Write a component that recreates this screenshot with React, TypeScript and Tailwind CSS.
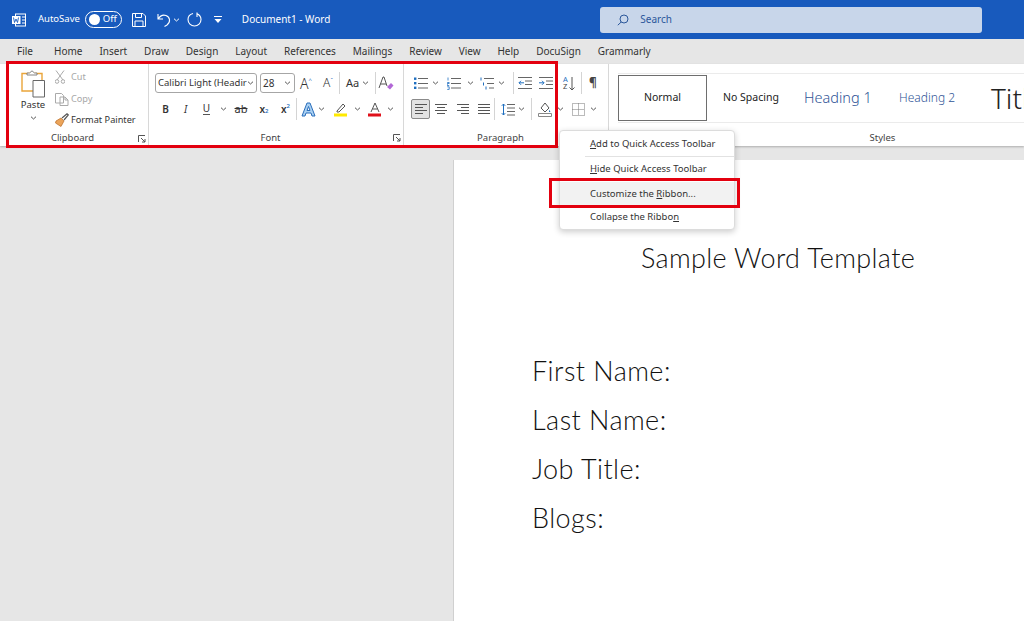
import type { ReactNode } from "react"

const tabs = ["Insert", "Draw", "Design", "Layout", "References", "Mailings", "Review", "View", "Help", "DocuSign", "Grammarly"]

function Chevron({ className = "" }: { className?: string }) {
  return (
    <svg viewBox="0 0 7 4" className={`h-[4px] w-[7px] shrink-0 ${className}`} fill="none" stroke="#555" strokeWidth="1">
      <path d="M1 .7 3.5 3 6 .7" />
    </svg>
  )
}

function Sep() {
  return <div className="h-[22px] w-px shrink-0 bg-[#d4d4d4]" />
}

function Launcher() {
  return (
    <svg viewBox="0 0 8 8" className="h-[8px] w-[8px]" fill="none" stroke="#555" strokeWidth="1">
      <path d="M.5 7V.5H7M3 3l4 4M7 4v3H4" />
    </svg>
  )
}

function Lines({ rows }: { rows: [number, number][] }) {
  return (
    <svg viewBox="0 0 14 12" className="h-[12px] w-[14px]" stroke="#555" strokeWidth="1">
      {rows.map(([a, b], i) => (
        <path key={i} d={`M${a} ${1.5 + i * 3}H${b}`} />
      ))}
    </svg>
  )
}

function ListIcon({ kind }: { kind: "bullet" | "number" | "multi" }) {
  return (
    <svg viewBox="0 0 14 13" className="h-[13px] w-[14px]" strokeWidth="1">
      {kind === "bullet" && (
        <>
          <rect x="0" y="0.5" width="2.4" height="2.4" fill="#1f6fc0" />
          <rect x="0" y="5" width="2.4" height="2.4" fill="#1f6fc0" />
          <rect x="0" y="9.6" width="2.4" height="2.4" fill="#1f6fc0" />
        </>
      )}
      {kind === "number" && (
        <path d="M1 .5v3M.2 5.5h2v1h-2v2h2M.2 9.8h2v2.6h-2" stroke="#1f6fc0" fill="none" strokeWidth=".8" />
      )}
      {kind === "multi" && <path d="M1 .5v3M3.5 5.5v3M6 9.5v3" stroke="#1f6fc0" strokeWidth="1" />}
      <path d={kind === "multi" ? "M4 1.5h10M7 6.5h7M9 11h5" : "M4 1.5h10M4 6.5h10M4 11h10"} stroke="#666" />
    </svg>
  )
}

function Indent({ flip }: { flip?: boolean }) {
  return (
    <svg viewBox="0 0 14 12" className="h-[12px] w-[14px]" fill="none" strokeWidth="1">
      <path d="M0 .5h14M7 4h7M7 7.5h7M0 11.5h14" stroke="#666" />
      <path d={flip ? "M0 5.8h5M3 3.8l2 2-2 2" : "M6 5.8H1M3 3.8l-2 2 2 2"} stroke="#1f6fc0" />
    </svg>
  )
}

function Btn({ w, children, className = "" }: { w: string; children?: ReactNode; className?: string }) {
  return <div className={`flex h-[22px] shrink-0 items-center justify-center ${w} ${className}`}>{children}</div>
}

function GroupLabel({ children, launcher }: { children: ReactNode; launcher?: boolean }) {
  return (
    <div className="relative mt-auto flex h-[16px] items-center justify-center text-[9.5px] text-[#444]">
      {children}
      {launcher && (
        <div className="absolute right-px top-[4px]">
          <Launcher />
        </div>
      )}
    </div>
  )
}

function Clipboard() {
  return (
    <div className="flex h-full w-[141px] shrink-0 flex-col border-r border-[#d8d8d8] pl-[12px] pr-px pt-[2px]">
      <div className="flex">
        <div className="mt-[4px] flex w-[26px] flex-col items-center">
          <svg viewBox="0 0 24 28" className="h-[28px] w-[24px]" fill="none">
            <path d="M1 3.5h20V21H1z" stroke="#eaa53a" strokeWidth="1.4" fill="#fff" />
            <path d="M6 5V3h2.5L11 .8 13.500 3H16v2z" stroke="#777" strokeWidth=".9" fill="#fff" />
            <path d="M12 10.500h11.500V27H12z" stroke="#666" strokeWidth="1" fill="#fff" />
          </svg>
          <span className="text-[9.5px] leading-[13px] text-[#333]">Paste</span>
          <Chevron className="mt-[5px]" />
        </div>
        <div className="ml-[9px] flex flex-col text-[9.2px] leading-[22px]">
          <div className="flex h-[22px] items-center gap-[5px] text-[#a8a8a8]">
            <svg viewBox="0 0 10 14" className="h-[14px] w-[10px]" fill="none" stroke="#aaa" strokeWidth="1">
              <path d="M1 .5 8 10M9 .5 2 10" />
              <circle cx="2" cy="11.500" r="1.800" />
              <circle cx="8" cy="11.500" r="1.800" />
            </svg>
            <span className="pl-px">Cut</span>
          </div>
          <div className="flex h-[22px] items-center gap-[2px] text-[#a8a8a8]">
            <svg viewBox="0 0 14 13" className="h-[13px] w-[14px]" fill="none" stroke="#aaa" strokeWidth="1">
              <path d="M.5.500h6l2 2V10H.5zM5 4h5l3 3v5.500H5z" fill="#fff" />
              <path d="M10 4v3h3" />
            </svg>
            <span>Copy</span>
          </div>
          <div className="mt-[-1px] flex h-[22px] items-center gap-[2px] text-[#333]">
            <svg viewBox="0 0 14 14" className="h-[14px] w-[14px]" fill="none">
              <path d="M1 8 6 5l3 3-3 5.500L.5 10z" fill="#eba45a" stroke="#b96c25" strokeWidth=".7" />
              <path d="M7 5 12 .8 13.300 2 9 7" stroke="#555" strokeWidth="1.200" />
            </svg>
            <span>Format Painter</span>
          </div>
        </div>
      </div>
      <GroupLabel launcher>
        <span className="pr-[22px]">Clipboard</span>
      </GroupLabel>
    </div>
  )
}

function FontGroup() {
  return (
    <div className="flex h-full w-[255px] shrink-0 flex-col border-r border-[#d8d8d8] pl-[6px] pr-px pt-[9px]">
      <div className="flex h-[20px] items-center text-[#333]">
        <div className="flex h-[20px] w-[102px] shrink-0 items-center justify-between rounded-[3px] border border-[#a6a6a6] pl-[2px] pr-[3px] text-[9.5px]">
          <span className="whitespace-nowrap">Calibri Light (Headir</span>
          <Chevron />
        </div>
        <div className="ml-[3px] flex h-[20px] w-[35px] shrink-0 items-center justify-between rounded-[3px] border border-[#a6a6a6] pl-[2px] pr-[3px] text-[10px]">
          <span>28</span>
          <Chevron />
        </div>
        <Btn w="w-[22px]">
          <span className="text-[14px] font-light">A</span>
          <span className="mb-[6px] text-[6px] text-[#1f6fc0]">^</span>
        </Btn>
        <Btn w="w-[22px]">
          <span className="text-[12px] font-light">A</span>
          <span className="mb-[6px] text-[6px] text-[#1f6fc0]">ˇ</span>
        </Btn>
        <Sep />
        <Btn w="w-[35px]" className="gap-[3px]">
          <span className="text-[11px]">Aa</span>
          <Chevron />
        </Btn>
        <Sep />
        <Btn w="w-[20px]">
          <svg viewBox="0 0 16 15" className="h-[15px] w-[16px]" fill="none">
            <path d="M1 12 5 1h1l3 9" stroke="#555" />
            <path d="M2.500 8H8" stroke="#555" />
            <path d="m9 11 4-4 2.500 2.500-3.500 4z" fill="#b267d6" />
          </svg>
        </Btn>
      </div>
      <div className="mt-[5px] flex h-[22px] items-center pl-px text-[#333]">
        <Btn w="w-[19px]" className="text-[10px] font-semibold">
          B
        </Btn>
        <Btn w="w-[21px]" className="text-[10px] italic">
          I
        </Btn>
        <Btn w="w-[21px]" className="text-[10px]">
          <span className="border-b border-[#555] leading-[11px]">U</span>
        </Btn>
        <Btn w="w-[12px]">
          <Chevron />
        </Btn>
        <Btn w="w-[24px]" className="text-[11px]">
          <span className="line-through">ab</span>
        </Btn>
        <Btn w="w-[22px]" className="text-[10px] font-semibold">
          x<sub className="text-[6px] text-[#1f6fc0]">2</sub>
        </Btn>
        <Btn w="w-[21px]" className="text-[10px] font-semibold">
          x<sup className="text-[6px] text-[#1f6fc0]">2</sup>
        </Btn>
        <Sep />
        <Btn w="w-[22px]">
          <svg viewBox="0 0 15 15" className="h-[15px] w-[15px]">
            <path fillRule="evenodd" d="M1 14 6 1h3l5 13h-3l-1-3H5l-1 3zM6 8.500h3L7.500 4.500z" fill="#a9d0f2" stroke="#2a6ebb" />
          </svg>
        </Btn>
        <Btn w="w-[5px]">
          <Chevron />
        </Btn>
        <Btn w="w-[30px]">
          <svg viewBox="0 0 14 15" className="ml-[4px] h-[15px] w-[14px]" fill="none">
            <path d="m3 9 6-7 2 2-6 6H3z" stroke="#555" />
            <rect x="0" y="11.500" width="13" height="3" fill="#ffea00" />
          </svg>
        </Btn>
        <Btn w="w-[6px]">
          <Chevron />
        </Btn>
        <Btn w="w-[28px]">
          <svg viewBox="0 0 14 15" className="ml-px h-[15px] w-[14px]" fill="none">
            <path d="m3 10 4-9 4 9M4.500 7h5" stroke="#555" />
            <rect x="0" y="11.500" width="13" height="3" fill="#e0101a" />
          </svg>
        </Btn>
        <Btn w="w-[5px]">
          <Chevron />
        </Btn>
      </div>
      <GroupLabel launcher>
        <span className="pr-[16px]">Font</span>
      </GroupLabel>
    </div>
  )
}

function ParagraphGroup() {
  return (
    <div className="flex h-full w-[205px] shrink-0 flex-col border-r border-[#d8d8d8] pl-[9px] pr-px pt-[9px]">
      <div className="flex h-[20px] items-center text-[#333]">
        <Btn w="w-[15px]">
          <ListIcon kind="bullet" />
        </Btn>
        <Btn w="w-[18px]" className="justify-start pl-[4px]">
          <Chevron />
        </Btn>
        <Btn w="w-[15px]">
          <ListIcon kind="number" />
        </Btn>
        <Btn w="w-[18px]" className="justify-start pl-[6px]">
          <Chevron />
        </Btn>
        <Btn w="w-[15px]">
          <ListIcon kind="multi" />
        </Btn>
        <Btn w="w-[18px]" className="justify-start pl-[4px]">
          <Chevron />
        </Btn>
        <Btn w="w-px" />
        <Sep />
        <Btn w="w-[21px]">
          <Indent />
        </Btn>
        <Btn w="w-[22px]">
          <Indent flip />
        </Btn>
        <Btn w="w-[24px]" className="gap-px">
          <div className="flex flex-col text-[7.5px] leading-[7.5px]">
            <span className="text-[#1f6fc0]">A</span>
            <span className="text-[#444]">Z</span>
          </div>
          <svg viewBox="0 0 6 15" className="h-[15px] w-[6px]" fill="none" stroke="#555">
            <path d="M3 1v13M.5 11.500 3 14l2.500-2.500" />
          </svg>
        </Btn>
        <Sep />
        <Btn w="w-[22px]" className="text-[12px] font-bold text-[#444]">
          ¶
        </Btn>
      </div>
      <div className="ml-[-2px] mt-[5px] flex h-[22px] items-center">
        <div className="flex h-[20px] w-[19px] shrink-0 items-center justify-center rounded-[2px] border border-[#8a8a8a] bg-[#e3e3e3]">
          <Lines rows={[[1, 13], [1, 9], [1, 13], [1, 9]]} />
        </div>
        <Btn w="w-[22px]">
          <Lines rows={[[1, 13], [3, 11], [1, 13], [3, 11]]} />
        </Btn>
        <Btn w="w-[22px]">
          <Lines rows={[[1, 13], [5, 13], [1, 13], [5, 13]]} />
        </Btn>
        <Btn w="w-[20px]">
          <Lines rows={[[1, 13], [1, 13], [1, 13], [1, 13]]} />
        </Btn>
        <Sep />
        <Btn w="w-[19px]" className="ml-[3px]">
          <svg viewBox="0 0 14 13" className="h-[13px] w-[14px]" fill="none">
            <path d="M2.500 1v11M.8 2.800 2.500 1l1.700 1.800M.8 10.200 2.500 12l1.700-1.800" stroke="#1f6fc0" />
            <path d="M6 1.500h8M6 5h8M6 8.500h8M6 12h8" stroke="#666" />
          </svg>
        </Btn>
        <Btn w="w-[9px]">
          <Chevron />
        </Btn>
        <Btn w="w-[5px]" />
        <Sep />
        <Btn w="w-[26px]">
          <svg viewBox="0 0 14 15" className="h-[15px] w-[14px]" fill="none">
            <path d="m7 1 4 5-4 4-4-4z" stroke="#555" />
            <path d="M11 7.500 12.500 10l-1.500 0z" fill="#1f6fc0" />
            <path d="M.5 11.500h13v3H.5z" stroke="#888" />
          </svg>
        </Btn>
        <Btn w="w-[5px]">
          <Chevron />
        </Btn>
        <Btn w="w-[24px]" className="pl-[6px]">
          <svg viewBox="0 0 13 13" className="h-[13px] w-[13px]" fill="none" stroke="#777" strokeDasharray="1 1">
            <path d="M.5.500h12v12H.5zM6.500.500v12M.5 6.500h12" />
          </svg>
        </Btn>
        <Btn w="w-[12px]">
          <Chevron />
        </Btn>
      </div>
      <GroupLabel>
        <span className="pr-[19px]">Paragraph</span>
      </GroupLabel>
    </div>
  )
}

function StylesGroup() {
  return (
    <div className="flex h-full flex-1 flex-col pl-[9px] pt-[9px]">
      <div className="flex h-[50px] items-center overflow-hidden border-y border-[#ebebeb] text-[#222]">
        <div className="flex h-[46px] w-[89px] shrink-0 items-center justify-center border border-[#6e6e6e] text-[10.5px]">
          Normal
        </div>
        <div className="ml-[16px] w-[56px] shrink-0 whitespace-nowrap text-[10.5px]">No Spacing</div>
        <div className="ml-[25px] w-[70px] shrink-0 whitespace-nowrap text-[14.5px] font-light text-[#2f5597]">Heading 1</div>
        <div className="ml-[25px] w-[56px] shrink-0 whitespace-nowrap text-[12px] font-light text-[#2f5597]">Heading 2</div>
        <div className="ml-[36px] shrink-0 text-[28px] font-light">Title</div>
      </div>
      <div className="mt-auto flex h-[16px] w-[529px] items-center justify-center text-[9.5px] text-[#444]">Styles</div>
    </div>
  )
}

export default function App() {
  return (
    <div className="relative flex h-[621px] w-[1024px] flex-col overflow-hidden bg-[#e6e6e6] font-['Noto_Sans',sans-serif]">
      <header className="flex h-[39px] shrink-0 items-center bg-[#185abd] text-white">
        <svg viewBox="0 0 14 14" className="ml-[12px] h-[14px] w-[14px]" fill="none">
          <rect x="3.500" y="1" width="10" height="12" stroke="#fff" />
          <rect x="0" y="3" width="8.500" height="8" fill="#fff" />
          <path d="m1.500 4.500 1 5 1.500-3.500 1.500 3.500 1-5" stroke="#185abd" strokeWidth=".9" />
          <path d="M10 4h3M10 7h3M10 10h3" stroke="#fff" />
        </svg>
        <span className="ml-[12px] text-[9.500px]">AutoSave</span>
        <div className="ml-[5px] flex h-[17px] w-[37px] items-center rounded-full border border-white pl-[3px]">
          <span className="h-[11px] w-[11px] rounded-full bg-white" />
          <span className="ml-[3px] text-[9.5px]">Off</span>
        </div>
        <svg viewBox="0 0 14 14" className="ml-[10px] h-[14px] w-[14px]" fill="none" stroke="#fff">
          <path d="M.5.500h10.500l2.500 2.500v10.500H.5zM3.500.5v4h6v-4M3 13.500V8h8v5.500" />
        </svg>
        <svg viewBox="0 0 14 14" className="ml-[11px] h-[14px] w-[14px]" fill="none" stroke="#fff" strokeWidth="1.100">
          <path d="M1 1v5h5M1.200 6C3 3 6 1.500 9 2.500c4 1.500 5 6.500 1 9.500L7.500 13.500" />
        </svg>
        <Chevron className="ml-[2px] [&>path]:stroke-white" />
        <svg viewBox="0 0 15 15" className="ml-[7px] h-[15px] w-[15px]" fill="none" stroke="#fff" strokeWidth="1.100">
          <path d="M6 1.500c-3 .8-5 3-5 6a6.500 6.500 0 1 0 13 0c0-2.500-1.500-4.700-4-5.800M10 .5v4.500" />
        </svg>
        <svg viewBox="0 0 8 7" className="ml-[12px] h-[7px] w-[8px]" fill="#fff">
          <path d="M0 0h8v1H0zM.5 3h7L4 7z" />
        </svg>
        <span className="ml-[20px] whitespace-nowrap text-[10px]">Document1 - Word</span>
        <div className="ml-[270px] flex h-[26px] w-[382px] items-center rounded-[3px] bg-[#c8d6ea] pl-[17px] text-[#2b579a]">
          <svg viewBox="0 0 12 12" className="h-[12px] w-[12px]" fill="none" stroke="#2b579a">
            <circle cx="7" cy="5" r="4" />
            <path d="M4.200 8 .8 11.200" />
          </svg>
          <span className="ml-[11px] text-[10px]">Search</span>
        </div>
      </header>

      <nav className="flex h-[25px] shrink-0 items-center bg-[#e6e6e6] pl-[17px] text-[10px] text-[#333]">
        <span>File</span>
        <div className="relative ml-[21px] mr-[17px] flex h-[25px] items-center">
          Home
          <span className="absolute bottom-0 left-0 right-0 h-[2px] bg-[#b8393f]" />
        </div>
        <div className="flex gap-[16.9px]">
          {tabs.map((t) => (
            <span key={t}>{t}</span>
          ))}
        </div>
      </nav>

      <section className="flex h-[82px] shrink-0 bg-white pl-[8px] shadow-[0_1px_2px_rgba(0,0,0,0.25)]">
        <Clipboard />
        <FontGroup />
        <ParagraphGroup />
        <StylesGroup />
      </section>

      <main className="flex-1 pl-[453px] pt-[14px]">
        <div className="h-[600px] w-[649px] border-l border-[#d0d0d0] bg-white pt-[80px] font-['Lato',sans-serif] text-[#111]">
          <h1 className="text-center text-[27px] font-light leading-[36px] tracking-[0.35px]">Sample Word Template</h1>
          <div className="mt-[77px] flex flex-col gap-[13px] pl-[78px] text-[27px] font-light leading-[36px] tracking-[0.45px]">
            <p>First Name:</p>
            <p>Last Name:</p>
            <p>Job Title:</p>
            <p>Blogs:</p>
          </div>
        </div>
      </main>

      <div className="absolute left-[6px] top-[61px] h-[87px] w-[552px] border-[3px] border-[#e3000f]" />

      <div className="absolute left-[559px] top-[130px] flex h-[100px] w-[176px] flex-col rounded-[4px] border border-[#dcdcdc] bg-white pt-px text-[9.5px] text-[#333] shadow-[0_2px_6px_rgba(0,0,0,0.2)]">
        <div className="flex h-[24px] items-center pl-[30px]">
          <span>
            <u>A</u>dd to Quick Access Toolbar
          </span>
        </div>
        <div className="ml-[25px] h-px bg-[#e2e2e2]" />
        <div className="flex h-[25px] items-center pl-[30px]">
          <span>
            <u>H</u>ide Quick Access Toolbar
          </span>
        </div>
        <div className="flex h-[24px] items-center bg-[#f2f2f2] pl-[30px]">
          <span>
            Customize the <u>R</u>ibbon...
          </span>
        </div>
        <div className="flex h-[23px] items-center pl-[30px]">
          <span>
            Collapse the Ribbo<u>n</u>
          </span>
        </div>
      </div>

      <div className="absolute left-[549px] top-[178px] h-[30px] w-[191px] border-[3px] border-[#e3000f]" />
    </div>
  )
}
